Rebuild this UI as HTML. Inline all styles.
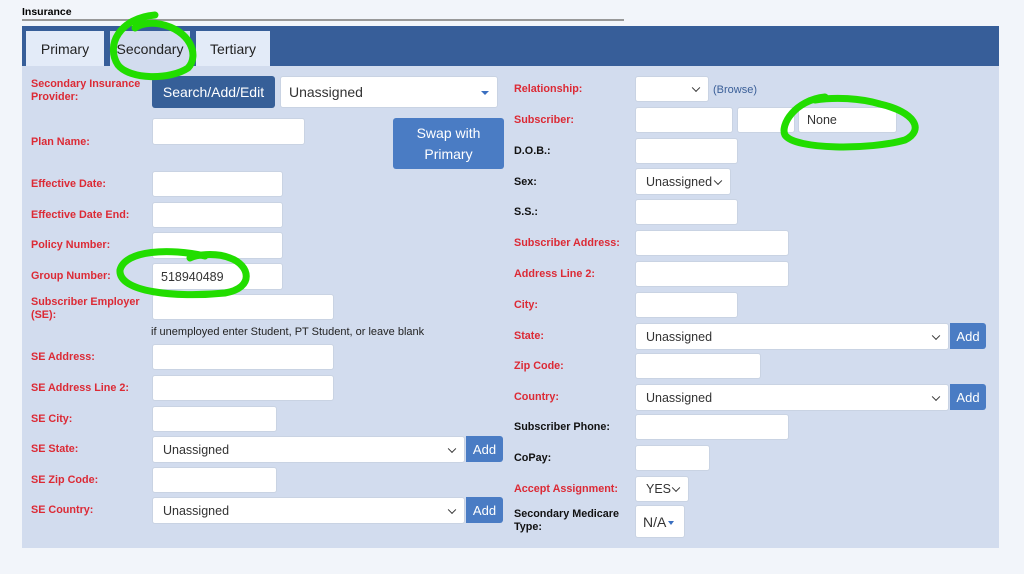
<!DOCTYPE html>
<html><head><meta charset="utf-8"><style>
body{margin:0;width:1024px;height:574px;background:#f2f5fa;font-family:"Liberation Sans",sans-serif;position:relative;overflow:hidden}
.a{position:absolute}
.l{position:absolute;font-size:10.8px;font-weight:bold;color:#dc2a35;line-height:13px}
.k{color:#111}
.i{position:absolute;background:#fff;border:1px solid #c9d3e3;border-radius:3px;box-sizing:border-box;font-size:12.5px;color:#333;padding-left:10px;display:flex;align-items:center}
.s::after{content:"";position:absolute;right:9px;top:50%;width:5px;height:5px;border-right:1px solid #333;border-bottom:1px solid #333;transform:translateY(-70%) rotate(45deg)}
.add{position:absolute;background:#4a7cc4;color:#fff;font-size:13px;display:flex;align-items:center;justify-content:center;border-radius:0 3px 3px 0}
.tab{position:absolute;top:31px;height:35px;background:#e3ebf8;font-size:14px;color:#222;display:flex;align-items:center;justify-content:center}
</style></head><body>
<div class="a" style="left:22px;top:6px;font-size:10.5px;font-weight:bold">Insurance</div>
<div class="a" style="left:22px;top:19px;width:602px;height:2px;background:#999"></div>
<div class="a" style="left:22px;top:26px;width:977px;height:522px;background:#d2dcee"></div>
<div class="a" style="left:22px;top:26px;width:977px;height:40px;background:#375e99"></div>
<div class="tab" style="left:26px;width:78px">Primary</div>
<div class="tab" style="left:110px;width:80px;background:#d2dcee">Secondary</div>
<div class="tab" style="left:196px;width:74px">Tertiary</div>

<div class="l" style="left:31px;top:78px">Secondary Insurance<br>Provider:</div>
<div class="a" style="left:152px;top:76px;width:123px;height:32px;background:#365f98;border-radius:3px;color:#fff;font-size:14px;display:flex;align-items:center;justify-content:center">Search/Add/Edit</div>
<div class="i" style="left:280px;top:76px;width:218px;height:32px;font-size:14px;padding-left:8px">Unassigned<span class="a" style="right:8px;top:14px;border:4px solid transparent;border-top:4px solid #3a6fc0;border-bottom:0"></span></div>
<div class="l" style="left:31px;top:136px">Plan Name:</div>
<div class="i" style="left:152px;top:118px;width:153px;height:27px"></div>
<div class="a" style="left:393px;top:118px;width:111px;height:51px;background:#4a7cc4;border-radius:3px;color:#fff;font-size:14px;text-align:center;line-height:21px;padding-top:5px;box-sizing:border-box">Swap with<br>Primary</div>
<div class="l" style="left:31px;top:178px">Effective Date:</div>
<div class="i" style="left:152px;top:171px;width:131px;height:26px"></div>
<div class="l" style="left:31px;top:209px">Effective Date End:</div>
<div class="i" style="left:152px;top:202px;width:131px;height:26px"></div>
<div class="l" style="left:31px;top:239px">Policy Number:</div>
<div class="i" style="left:152px;top:232px;width:131px;height:27px"></div>
<div class="l" style="left:31px;top:270px">Group Number:</div>
<div class="i" style="left:152px;top:263px;width:131px;height:27px;padding-left:8px">518940489</div>
<div class="l" style="left:31px;top:296px">Subscriber Employer<br>(SE):</div>
<div class="i" style="left:152px;top:294px;width:182px;height:26px"></div>
<div class="a" style="left:151px;top:326px;font-size:11px;color:#222">if unemployed enter Student, PT Student, or leave blank</div>
<div class="l" style="left:31px;top:351px">SE Address:</div>
<div class="i" style="left:152px;top:344px;width:182px;height:26px"></div>
<div class="l" style="left:31px;top:382px">SE Address Line 2:</div>
<div class="i" style="left:152px;top:375px;width:182px;height:26px"></div>
<div class="l" style="left:31px;top:413px">SE City:</div>
<div class="i" style="left:152px;top:406px;width:125px;height:26px"></div>
<div class="l" style="left:31px;top:443px">SE State:</div>
<div class="i s" style="left:152px;top:436px;width:313px;height:27px">Unassigned</div>
<div class="add" style="left:466px;top:436px;width:37px;height:26px">Add</div>
<div class="l" style="left:31px;top:474px">SE Zip Code:</div>
<div class="i" style="left:152px;top:467px;width:125px;height:26px"></div>
<div class="l" style="left:31px;top:504px">SE Country:</div>
<div class="i s" style="left:152px;top:497px;width:313px;height:27px">Unassigned</div>
<div class="add" style="left:466px;top:497px;width:37px;height:26px">Add</div>

<div class="l" style="left:514px;top:83px">Relationship:</div>
<div class="i s" style="left:635px;top:76px;width:74px;height:26px"></div>
<div class="a" style="left:713px;top:84px;font-size:11px;color:#3a5f98">(Browse)</div>
<div class="l" style="left:514px;top:114px">Subscriber:</div>
<div class="i" style="left:635px;top:107px;width:98px;height:26px"></div>
<div class="i" style="left:737px;top:107px;width:58px;height:26px"></div>
<div class="i" style="left:798px;top:107px;width:99px;height:26px;padding-left:8px">None</div>
<div class="l k" style="left:514px;top:145px">D.O.B.:</div>
<div class="i" style="left:635px;top:138px;width:103px;height:26px"></div>
<div class="l k" style="left:514px;top:176px">Sex:</div>
<div class="i s" style="left:635px;top:168px;width:96px;height:27px">Unassigned</div>
<div class="l k" style="left:514px;top:206px">S.S.:</div>
<div class="i" style="left:635px;top:199px;width:103px;height:26px"></div>
<div class="l" style="left:514px;top:237px">Subscriber Address:</div>
<div class="i" style="left:635px;top:230px;width:154px;height:26px"></div>
<div class="l" style="left:514px;top:268px">Address Line 2:</div>
<div class="i" style="left:635px;top:261px;width:154px;height:26px"></div>
<div class="l" style="left:514px;top:299px">City:</div>
<div class="i" style="left:635px;top:292px;width:103px;height:26px"></div>
<div class="l" style="left:514px;top:330px">State:</div>
<div class="i s" style="left:635px;top:323px;width:314px;height:27px">Unassigned</div>
<div class="add" style="left:950px;top:323px;width:36px;height:26px">Add</div>
<div class="l" style="left:514px;top:360px">Zip Code:</div>
<div class="i" style="left:635px;top:353px;width:126px;height:26px"></div>
<div class="l" style="left:514px;top:391px">Country:</div>
<div class="i s" style="left:635px;top:384px;width:314px;height:27px">Unassigned</div>
<div class="add" style="left:950px;top:384px;width:36px;height:26px">Add</div>
<div class="l k" style="left:514px;top:421px">Subscriber Phone:</div>
<div class="i" style="left:635px;top:414px;width:154px;height:26px"></div>
<div class="l k" style="left:514px;top:452px">CoPay:</div>
<div class="i" style="left:635px;top:445px;width:75px;height:26px"></div>
<div class="l" style="left:514px;top:483px">Accept Assignment:</div>
<div class="i s" style="left:635px;top:476px;width:54px;height:26px">YES</div>
<div class="l k" style="left:514px;top:508px">Secondary Medicare<br>Type:</div>
<div class="i" style="left:635px;top:505px;width:50px;height:33px;padding-left:7px;font-size:14px">N/A<span style="margin-left:2px;border:3.5px solid transparent;border-top:4px solid #3a6fc0;border-bottom:0;margin-top:2px"></span></div>

<svg class="a" style="left:0;top:0" width="1024" height="574" fill="none" stroke="#22dd00" stroke-width="7" stroke-linecap="round">
<path d="M155 15 C120 18 105 45 118 65 C130 80 170 80 188 68 C200 55 190 30 160 24 C150 22 140 24 135 28"/>
<path d="M205 256 C170 248 125 250 120 270 C118 292 175 298 225 293 C255 288 250 265 230 258 C215 252 195 255 190 258"/>
<path d="M825 97 C795 100 780 125 785 135 C795 150 870 150 905 140 C925 130 915 112 880 104 C860 98 835 97 815 100"/>
</svg>
</body></html>
